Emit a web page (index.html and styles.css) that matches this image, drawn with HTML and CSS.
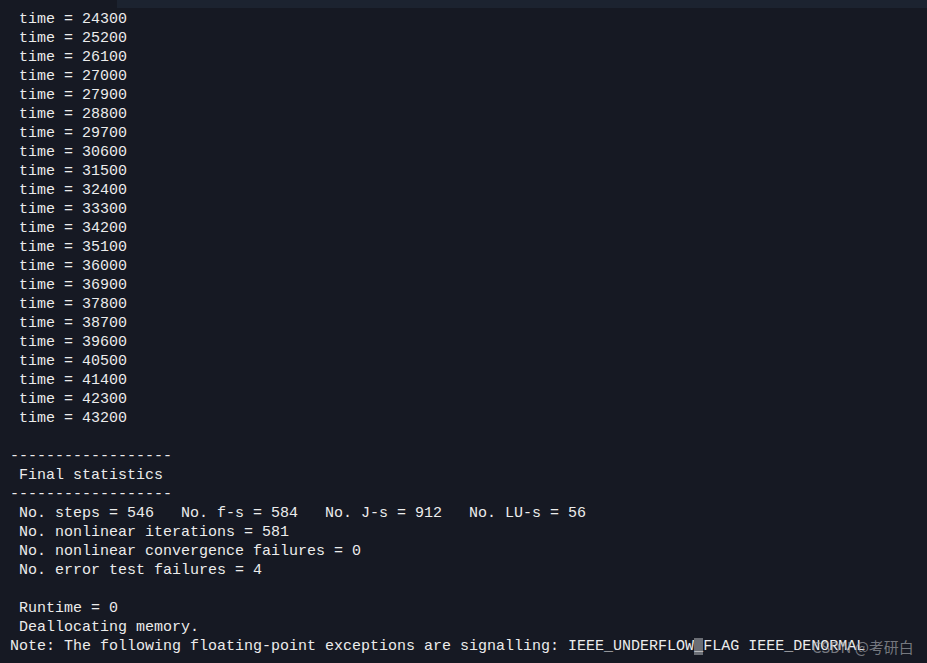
FILE: index.html
```html
<!DOCTYPE html>
<html>
<head>
<meta charset="utf-8">
<link rel="stylesheet" href="styles.css">
</head>
<body>
<div class="topbar"><div class="tab-gap"></div><div class="tab-fill"></div></div>
<pre class="term"> time = 24300
 time = 25200
 time = 26100
 time = 27000
 time = 27900
 time = 28800
 time = 29700
 time = 30600
 time = 31500
 time = 32400
 time = 33300
 time = 34200
 time = 35100
 time = 36000
 time = 36900
 time = 37800
 time = 38700
 time = 39600
 time = 40500
 time = 41400
 time = 42300
 time = 43200

------------------
 Final statistics
------------------
 No. steps = 546   No. f-s = 584   No. J-s = 912   No. LU-s = 56
 No. nonlinear iterations = 581
 No. nonlinear convergence failures = 0
 No. error test failures = 4

 Runtime = 0
 Deallocating memory.
Note: The following floating-point exceptions are signalling: IEEE_UNDERFLOW<span class="cursor">_</span>FLAG IEEE_DENORMAL</pre>
<div class="watermark">CSDN @考研白</div>
</body>
</html>
```
FILE: styles.css
```css
html, body {
  margin: 0;
  padding: 0;
  background: #161923;
  width: 927px;
  height: 663px;
  overflow: hidden;
}
.topbar {
  display: flex;
  height: 8px;
}
.tab-gap {
  width: 117px;
  background: #161923;
}
.tab-fill {
  flex: 1;
  background: #1c2330;
}
.term {
  margin: 0;
  padding: 2px 0 0 10px;
  font-family: "Liberation Mono", monospace;
  font-size: 15px;
  line-height: 19px;
  color: #ececec;
  white-space: pre;
}
.cursor {
  background: #6b6e75;
  color: #ececec;
}
.watermark {
  position: absolute;
  left: 812px;
  top: 637px;
  font-family: "Noto Sans CJK SC", "Noto Sans", sans-serif;
  font-size: 15px;
  line-height: 20px;
  color: rgba(160, 162, 168, 0.7);
}
```
